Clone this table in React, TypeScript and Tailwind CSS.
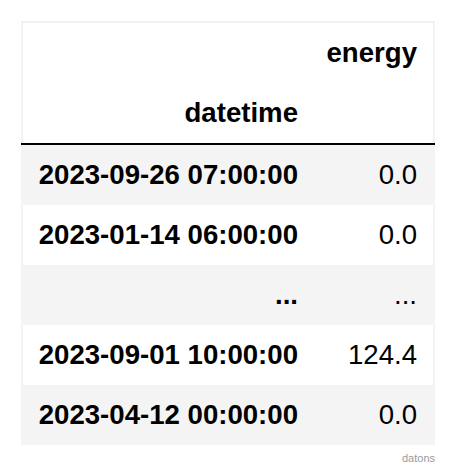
const ROWS = [
  { datetime: '2023-09-26 07:00:00', energy: '0.0' },
  { datetime: '2023-01-14 06:00:00', energy: '0.0' },
  { datetime: '...', energy: '...' },
  { datetime: '2023-09-01 10:00:00', energy: '124.4' },
  { datetime: '2023-04-12 00:00:00', energy: '0.0' },
];

export default function App() {
  return (
    <div className="w-[456px] h-[468px] bg-white pt-[21px] pl-[21px] font-['Liberation_Sans',Arial,sans-serif] text-black">
      <div className="w-[414px]">
        {/* header */}
        <div className="border-[#f2f2f2] border-x-2 border-t-2">
          <div className="grid grid-cols-[291px_119px] h-[60px] items-center">
            <div />
            <div className="text-right pr-4 text-[27.6px] font-bold leading-none">energy</div>
          </div>
          <div className="grid grid-cols-[291px_119px] h-[60px] items-center">
            <div className="text-right pr-4 text-[27.6px] font-bold leading-none">datetime</div>
            <div />
          </div>
        </div>
        <div className="h-[2px] bg-black" />

        {/* body */}
        {ROWS.map((row, i) => (
          <div
            key={i}
            className={`grid grid-cols-[291px_119px] h-[60px] items-center border-x-2 ${
              i % 2 === 0 ? 'bg-[#f4f4f4] border-[#f4f4f4]' : 'bg-white border-[#f2f2f2]'
            }`}
          >
            <div className="text-right pr-4 text-[27.6px] font-bold leading-none">{row.datetime}</div>
            <div className="text-right pr-4 text-[27.6px] leading-none">{row.energy}</div>
          </div>
        ))}
        <div className="text-right text-[11px] text-[#9a9a9a] mt-[8px] leading-none">datons</div>
      </div>
    </div>
  );
}
